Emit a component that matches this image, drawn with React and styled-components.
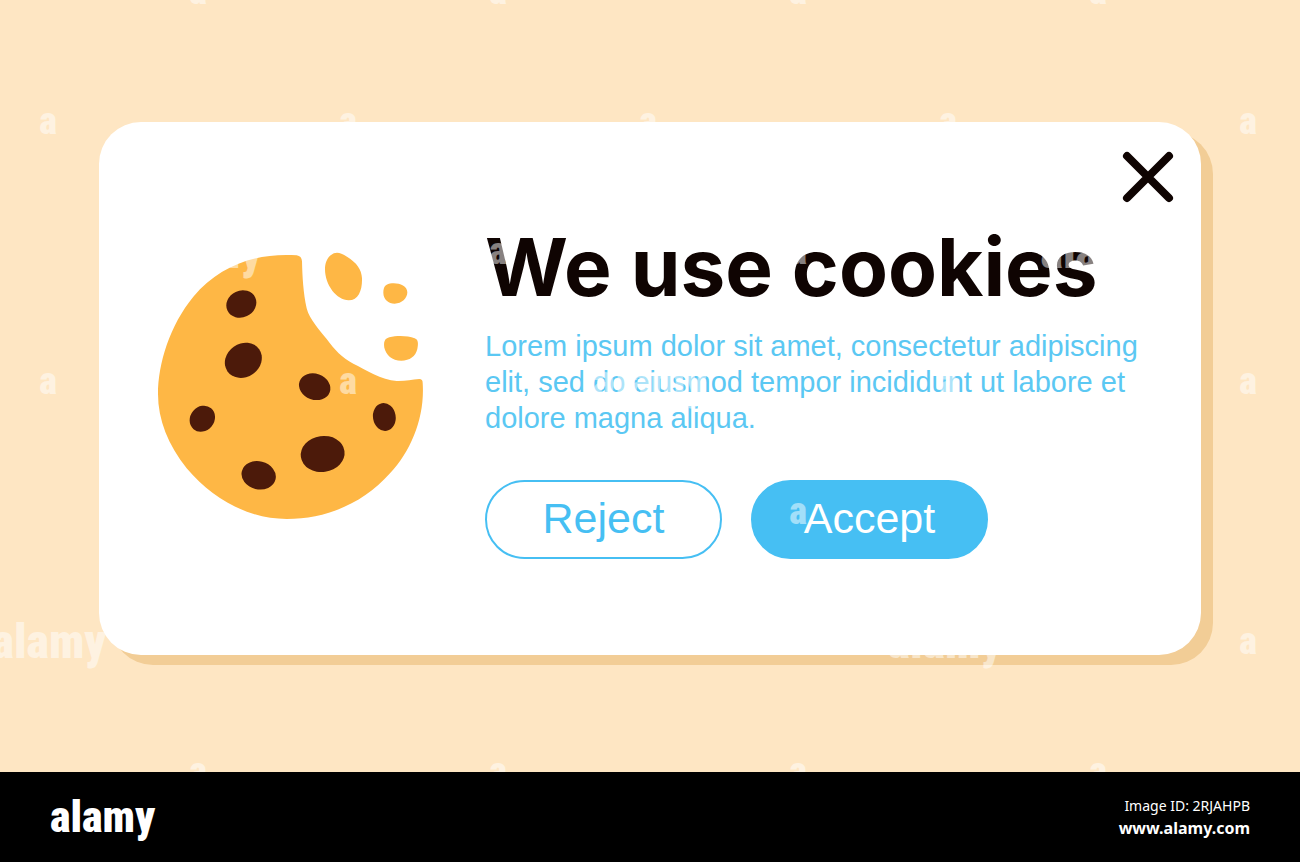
import React from 'react'
import styled, { createGlobalStyle } from 'styled-components'

const colors = {
  cream: '#fee6c3',
  sand: '#f2cd96',
  blue: '#46bff3',
  sky: '#5bc8f3',
  ink: '#0f0402',
  dough: '#feb745',
  chip: '#4c1a0a',
}

const fonts = {
  heading: "Inter, 'Open Sans', sans-serif",
  body: "'Liberation Sans', Arial, sans-serif",
  footer: "'Noto Sans', sans-serif",
  logo: "'Roboto Condensed', 'Liberation Sans Narrow', 'DejaVu Sans Condensed', sans-serif",
}

const GlobalStyle = createGlobalStyle`
  * {
    box-sizing: border-box;
  }
  body {
    margin: 0;
    background: ${colors.cream};
    font-family: ${fonts.body};
  }
`

const Page = styled.div`
  display: flex;
  flex-direction: column;
  min-height: 100vh;
`

const Stage = styled.main`
  position: relative;
  flex: 1;
  padding: 122px 99px 117px;
  overflow: hidden;
`

const Card = styled.section`
  display: flex;
  flex-direction: column;
  padding: 29px 27px 96px 58px;
  border-radius: 42px;
  background: #fff;
  box-shadow: 12px 10px 0 ${colors.sand};
`

const CloseButton = styled.button`
  align-self: flex-end;
  width: 52px;
  height: 52px;
  padding: 0;
  border: 0;
  background: none;
  cursor: pointer;

  svg {
    display: block;
  }
`

const CardBody = styled.div`
  display: flex;
  align-items: flex-start;
  gap: 60px;
  margin-top: 20px;
`

const CookieArt = styled.svg`
  flex: none;
  width: 268px;
  height: 268px;
  margin-top: 29px;
`

const Content = styled.div`
  flex: 1;
`

const Title = styled.h1`
  margin: 0;
  font-family: ${fonts.heading};
  font-size: 80px;
  font-weight: 700;
  line-height: 88px;
  white-space: nowrap;
  color: ${colors.ink};
`

const Description = styled.p`
  margin: 17px 0 0;
  padding-right: 24px;
  font-size: 29px;
  line-height: 36px;
  color: ${colors.sky};
`

const Actions = styled.div`
  display: flex;
  gap: 29px;
  margin-top: 44px;
`

const Button = styled.button`
  width: 237px;
  height: 79px;
  padding: 0 0 4px;
  border: 2px solid ${colors.blue};
  border-radius: 40px;
  background: ${({ $filled }) => ($filled ? colors.blue : '#fff')};
  font-family: ${fonts.body};
  font-size: 43px;
  line-height: 48px;
  color: ${({ $filled }) => ($filled ? '#fff' : colors.blue)};
  cursor: pointer;
`

const Watermarks = styled.div`
  position: absolute;
  inset: 0;
  pointer-events: none;
`

const Mark = styled.span`
  position: absolute;
  left: ${({ $x }) => $x}px;
  top: ${({ $y }) => $y}px;
  transform: translate(-50%, -50%);
  font-family: ${fonts.logo};
  font-size: ${({ $large }) => ($large ? 48 : 38)}px;
  font-weight: 900;
  line-height: 1;
  color: rgba(255, 255, 255, 0.5);
`

const Footer = styled.footer`
  display: flex;
  align-items: center;
  justify-content: space-between;
  height: 90px;
  padding: 0 50px;
  background: #000;
  color: #fff;
`

const Logo = styled.span`
  font-family: ${fonts.logo};
  font-size: 44px;
  font-weight: 900;
  line-height: 1;
`

const Credits = styled.div`
  display: flex;
  flex-direction: column;
  align-items: flex-end;
  font-family: ${fonts.footer};
  line-height: 23px;
`

const ImageId = styled.span`
  font-size: 14px;
`

const SiteLink = styled.a`
  font-size: 16px;
  font-weight: 700;
  color: inherit;
  text-decoration: none;
`

const largeMarks = [
  { x: 205, y: 252 },
  { x: 1098, y: 252 },
  { x: 650, y: 382 },
  { x: 49, y: 642 },
  { x: 945, y: 642 },
]

// small marks sit on a staggered 300 x 260 grid, leaving room for the large ones
const smallMarks = []
for (let row = 0; row < 7; row++) {
  const start = row % 2 ? 48 : 198
  for (let x = start; x < 1300; x += 300) {
    const y = row * 130 - 9
    if (!largeMarks.some((mark) => Math.abs(mark.x - x) < 20 && Math.abs(mark.y - y) < 20)) {
      smallMarks.push({ x, y })
    }
  }
}

const chips = [
  { cx: 304, cy: 222, rx: 46, ry: 40, angle: -25 },
  { cx: 310, cy: 391, rx: 58, ry: 50, angle: -35 },
  { cx: 524, cy: 470, rx: 48, ry: 39, angle: 20 },
  { cx: 187, cy: 566, rx: 41, ry: 36, angle: -50 },
  { cx: 733, cy: 561, rx: 34, ry: 42, angle: -10 },
  { cx: 548, cy: 672, rx: 66, ry: 54, angle: -8 },
  { cx: 356, cy: 736, rx: 52, ry: 42, angle: 14 },
]

const Cookie = () => (
  <CookieArt viewBox="51 66 804 804" aria-hidden="true">
    <g fill={colors.dough}>
      <path d="M470 76Q485 78 486 94C487 140 490 190 500 235C508 268 540 302 560 327C585 360 605 383 640 401C675 418 725 450 770 453C795 454 815 448 838 447Q848 447 848 458C855 560 815 660 750 730C670 820 560 867 440 867C330 867 220 810 140 715C85 645 54 570 54 492C54 400 90 285 160 200C240 105 350 68 470 76Z" />
      <path d="M572 76C588 62 604 69 621 80C650 98 665 118 666 145C667 180 656 211 626 211C590 211 555 165 555 118C555 102 560 86 572 76Z" />
      <path d="M740 164C760 154 802 161 802 187C802 205 785 221 764 221C746 221 730 208 730 188C730 177 732 168 740 164Z" />
      <path d="M748 322C772 316 803 317 824 325C836 329 835 344 832 357C827 379 809 392 784 392C756 392 738 374 733 353C731 339 732 326 748 322Z" />
    </g>
    <g fill={colors.chip}>
      {chips.map(({ cx, cy, rx, ry, angle }) => (
        <ellipse
          key={`${cx}-${cy}`}
          cx={cx}
          cy={cy}
          rx={rx}
          ry={ry}
          transform={`rotate(${angle} ${cx} ${cy})`}
        />
      ))}
    </g>
  </CookieArt>
)

const App = () => (
  <Page>
    <GlobalStyle />
    <Stage>
      <Card aria-labelledby="cookie-title">
        <CloseButton type="button" aria-label="Close">
          <svg width="52" height="52" viewBox="0 0 52 52">
            <path d="M5 5L47 47M47 5L5 47" stroke={colors.ink} strokeWidth="8" strokeLinecap="round" />
          </svg>
        </CloseButton>
        <CardBody>
          <Cookie />
          <Content>
            <Title id="cookie-title">We use cookies</Title>
            <Description>
              Lorem ipsum dolor sit amet, consectetur adipiscing elit, sed do eiusmod tempor incididunt ut labore et
              dolore magna aliqua.
            </Description>
            <Actions>
              <Button type="button">Reject</Button>
              <Button type="button" $filled>
                Accept
              </Button>
            </Actions>
          </Content>
        </CardBody>
      </Card>
      <Watermarks aria-hidden="true">
        {smallMarks.map(({ x, y }) => (
          <Mark key={`${x}-${y}`} $x={x} $y={y}>
            a
          </Mark>
        ))}
        {largeMarks.map(({ x, y }) => (
          <Mark key={`${x}-${y}`} $x={x} $y={y} $large>
            alamy
          </Mark>
        ))}
      </Watermarks>
    </Stage>
    <Footer>
      <Logo>alamy</Logo>
      <Credits>
        <ImageId>Image ID: 2RJAHPB</ImageId>
        <SiteLink href="https://www.alamy.com">www.alamy.com</SiteLink>
      </Credits>
    </Footer>
  </Page>
)

export default App
